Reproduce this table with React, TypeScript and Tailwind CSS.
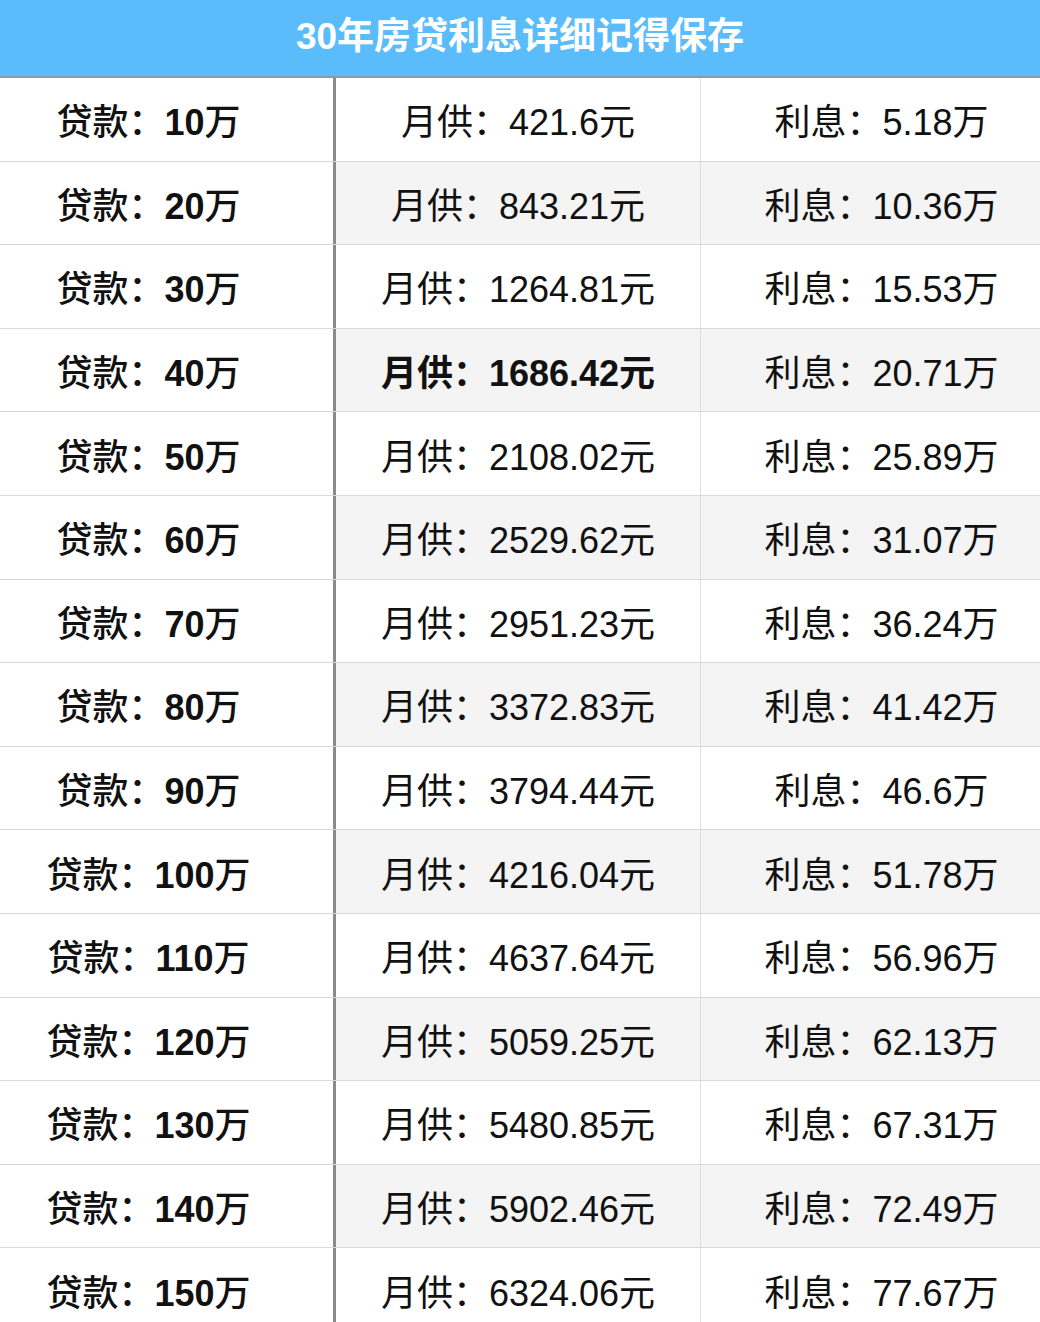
const rows = [
  ["10", "421.6", "5.18"],
  ["20", "843.21", "10.36"],
  ["30", "1264.81", "15.53"],
  ["40", "1686.42", "20.71"],
  ["50", "2108.02", "25.89"],
  ["60", "2529.62", "31.07"],
  ["70", "2951.23", "36.24"],
  ["80", "3372.83", "41.42"],
  ["90", "3794.44", "46.6"],
  ["100", "4216.04", "51.78"],
  ["110", "4637.64", "56.96"],
  ["120", "5059.25", "62.13"],
  ["130", "5480.85", "67.31"],
  ["140", "5902.46", "72.49"],
  ["150", "6324.06", "77.67"],
];

export default function App() {
  return (
    <div
      className="w-[1040px] h-[1322px] overflow-hidden bg-white text-[#111]"
      style={{ fontFamily: '"Liberation Sans", "Noto Sans CJK SC", sans-serif' }}
    >
      <div className="h-[78px] flex items-center justify-center bg-[#5bbcfb] border-b-2 border-[#8b9aa4]">
        <span className="text-white text-[37px] font-bold leading-none pb-1">
          30年房贷利息详细记得保存
        </span>
      </div>
      {rows.map(([loan, monthly, interest], i) => {
        const shade = i % 2 === 1 ? "bg-[#f4f4f4]" : "bg-white";
        const bold = loan === "40";
        return (
          <div key={loan} className="flex h-[83.6px] border-b border-[#d9d9d9] text-[36px] leading-none">
            <div className="w-[336px] flex items-center justify-center pt-2 pr-[36px] bg-white border-r-[3px] border-[#8a8a8a] font-medium">
              贷款：<span className="font-bold">{loan}</span>万
            </div>
            <div className={`w-[365px] flex items-center justify-center pt-2 border-r border-[#dcdcdc] ${shade} ${bold ? "font-bold" : "font-normal"}`}>
              月供：{monthly}元
            </div>
            <div className={`flex-1 flex items-center justify-center pt-2 pl-[22px] ${shade}`}>
              利息：{interest}万
            </div>
          </div>
        );
      })}
    </div>
  );
}
